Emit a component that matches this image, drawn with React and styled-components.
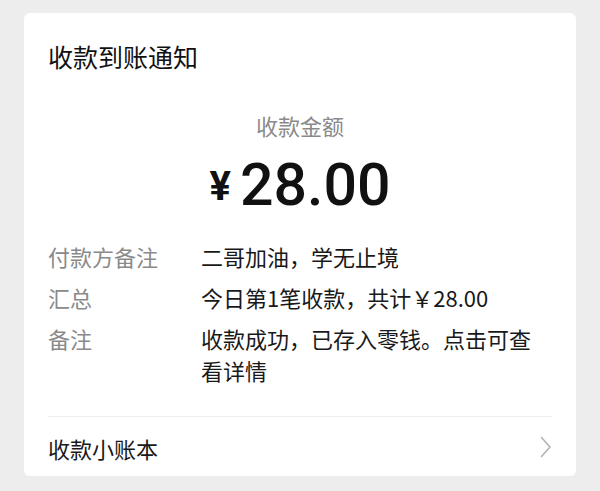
import React from 'react'
import styled, { createGlobalStyle } from 'styled-components'

const GlobalStyles = createGlobalStyle`
    html, body {
        margin: 0;
        padding: 0;
        background: #ededed;
    }
    body {
        font-family: "Noto Sans CJK SC", "Noto Sans", sans-serif;
        -webkit-font-smoothing: antialiased;
    }
`

const StyledPage = styled.div`
    padding: 13px 24px 14px;
`

const StyledCard = styled.div`
    display: flex;
    flex-direction: column;
    background: #ffffff;
    border-radius: 6px;
    padding: 26px 24px 0;
`

const StyledTitle = styled.div`
    font-size: 25px;
    line-height: 34px;
    color: #111111;
`

const StyledCaption = styled.div`
    margin-top: 37px;
    text-align: center;
    font-size: 22px;
    line-height: 30px;
    color: #8a8a8a;
`

const StyledAmount = styled.div`
    display: flex;
    justify-content: center;
    align-items: center;
    margin-top: 10px;
    height: 70px;
    font-family: Roboto, "Noto Sans", sans-serif;
    color: #111111;
`

const StyledCurrency = styled.span`
    font-size: 40px;
    font-weight: 700;
    margin-right: 9px;
    margin-top: 2px;
`

const StyledFigure = styled.span`
    font-size: 59px;
    font-weight: 500;
    line-height: 70px;
`

const StyledRows = styled.div`
    display: flex;
    flex-direction: column;
    gap: 9px;
    margin-top: 20px;
`

const StyledRow = styled.div`
    display: flex;
    font-size: 22px;
    line-height: 32px;
`

const StyledLabel = styled.div`
    flex: 0 0 153px;
    color: #8a8a8a;
`

const StyledValue = styled.div`
    flex: 1;
    color: #191919;
`

const StyledDivider = styled.div`
    height: 1px;
    background: #efefef;
    margin-top: 30px;
`

const StyledFooter = styled.div`
    display: flex;
    align-items: center;
    justify-content: space-between;
    padding: 15px 0 12px;
    font-size: 22px;
    line-height: 32px;
    color: #191919;
`

const StyledChevron = styled.svg`
    margin-top: -3px;
`

const Chevron = () =>
    <StyledChevron width='12' height='22' viewBox='0 0 12 22' fill='none'>
        <path d='M1.5 1.5 L10 11 L1.5 20.5' stroke='#b3b3b3' strokeWidth='1.6' strokeLinecap='round' strokeLinejoin='round'/>
    </StyledChevron>

const rows = [
    { label: '付款方备注', value: '二哥加油，学无止境' },
    { label: '汇总', value: '今日第1笔收款，共计￥28.00' },
    { label: '备注', value: '收款成功，已存入零钱。点击可查看详情' },
]

const App = () =>
    <StyledPage>
        <GlobalStyles/>
        <StyledCard>
            <StyledTitle>收款到账通知</StyledTitle>
            <StyledCaption>收款金额</StyledCaption>
            <StyledAmount>
                <StyledCurrency>¥</StyledCurrency>
                <StyledFigure>28.00</StyledFigure>
            </StyledAmount>
            <StyledRows>
                {rows.map(row =>
                    <StyledRow key={row.label}>
                        <StyledLabel>{row.label}</StyledLabel>
                        <StyledValue>{row.value}</StyledValue>
                    </StyledRow>
                )}
            </StyledRows>
            <StyledDivider/>
            <StyledFooter>
                <span>收款小账本</span>
                <Chevron/>
            </StyledFooter>
        </StyledCard>
    </StyledPage>

export default App
